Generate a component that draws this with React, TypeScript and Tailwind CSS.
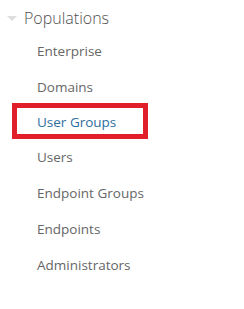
import React from "react";

const items = [
  "Enterprise",
  "Domains",
  "User Groups",
  "Users",
  "Endpoint Groups",
  "Endpoints",
  "Administrators",
];

function App() {
  return (
    <div
      className="w-[244px] h-[309px] bg-white"
      style={{ fontFamily: '"Open Sans", sans-serif' }}
    >
      <div className="flex items-center h-9">
        <span className="ml-[7px] w-0 h-0 border-l-[5px] border-r-[5px] border-t-[5px] border-l-transparent border-r-transparent border-t-[#dedede]" />
        <span className="ml-[7px] text-[16px] text-[#505050] font-light">
          Populations
        </span>
      </div>
      <ul className="-mt-[3px]">
        {items.map((item) =>
          item === "User Groups" ? (
            <li key={item} className="h-9">
              <div className="ml-[12px] -mt-[2px] w-[136px] h-9 border-[5px] border-[#e11f2b] pl-[20px] flex items-center text-[13.5px] text-[#2d6e9c]">
                <span className="mt-[2px]">{item}</span>
              </div>
            </li>
          ) : (
            <li
              key={item}
              className="h-9 pl-[37px] flex items-center text-[13.5px] text-[#666666]"
            >
              {item}
            </li>
          )
        )}
      </ul>
    </div>
  );
}

export default App;
